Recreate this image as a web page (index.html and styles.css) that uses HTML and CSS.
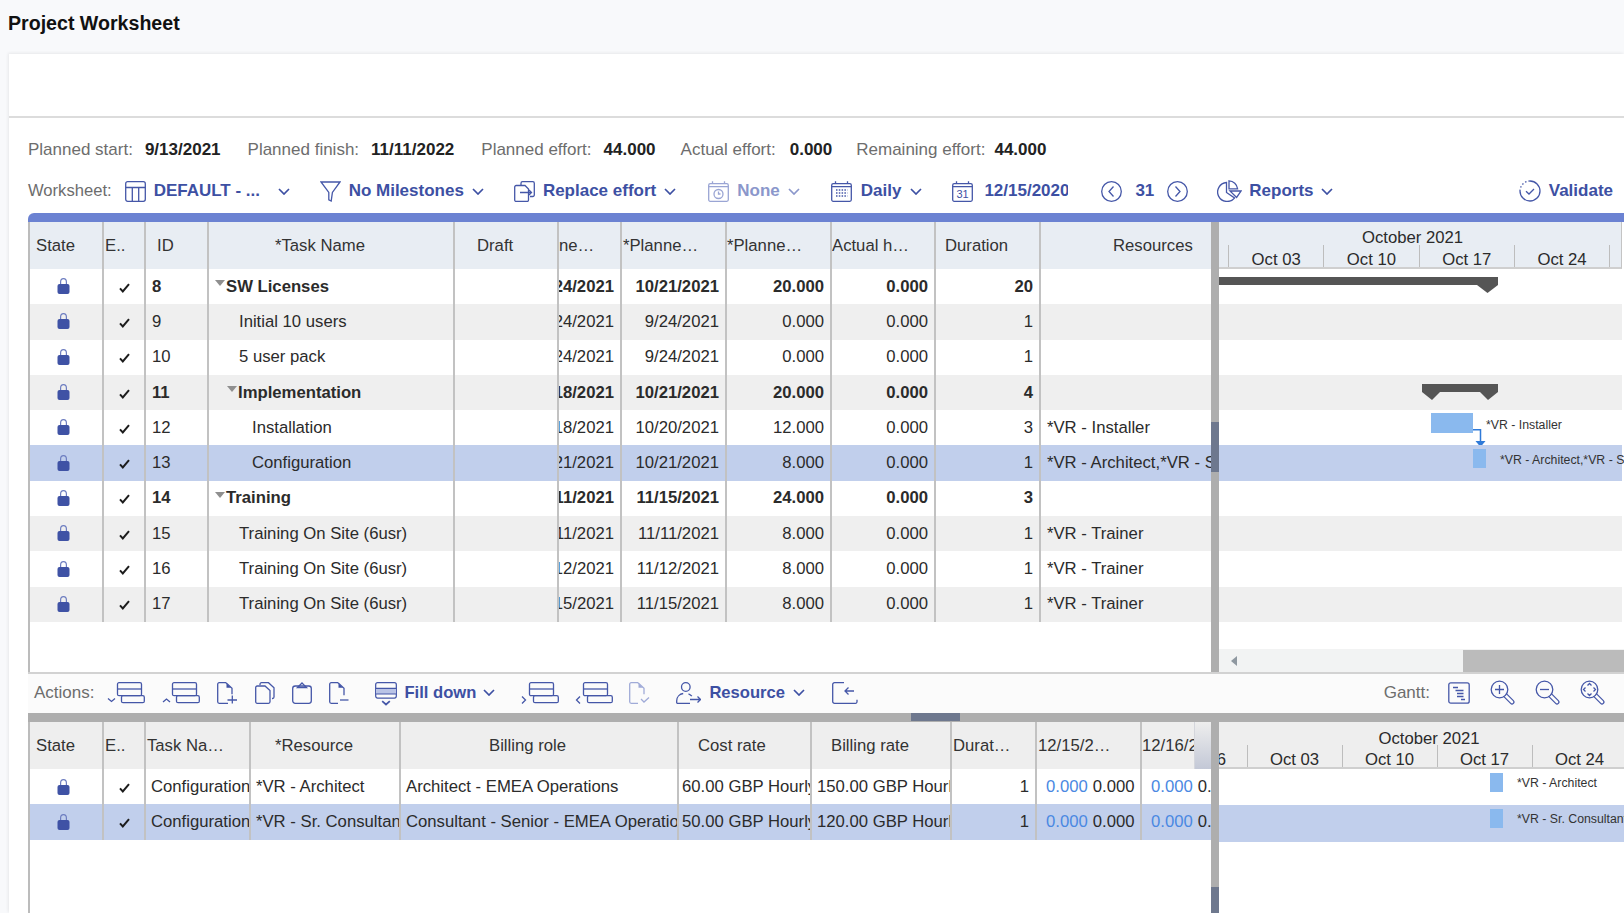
FILE: index.html
```html
<!DOCTYPE html>
<html lang="en">
<head>
<meta charset="utf-8">
<title>Project Worksheet</title>
<link rel="stylesheet" href="styles.css">
</head>
<body>
<svg class="sprite" xmlns="http://www.w3.org/2000/svg">
  <symbol id="chev" viewBox="0 0 12 7"><path d="M1 1l5 5 5-5"/></symbol>
  <symbol id="lock" viewBox="0 0 13 16"><path class="shackle" d="M3.600 6.500V4a2.900 3.300 0 0 1 5.800 0v2.500"/><rect class="solid" x=".5" y="6" width="12" height="10" rx="2"/></symbol>
  <symbol id="check" viewBox="0 0 11 10"><path class="tick" d="M1 5.400l2.800 3L10 1.200"/></symbol>
  <symbol id="i-table" viewBox="0 0 21 21"><rect x=".7" y=".7" width="19.600" height="19.600" rx="2"/><path d="M.7 6.500h19.600M7.300 6.500v13.800M13.700 6.500v13.800"/></symbol>
  <symbol id="i-funnel" viewBox="0 0 21 21"><path d="M1 1h19l-7.600 10.400-1.200 8.600-2.400-1.200V11.400z"/></symbol>
  <symbol id="i-replace" viewBox="0 0 21 21"><path d="M7 4V2.200A1.500 1.500 0 0 1 8.500.7h10.300a1.500 1.500 0 0 1 1.500 1.500V14a1.500 1.500 0 0 1-1.500 1.500H16"/><path d="M2.200 4.500H11l3.500 3.500v11a1.500 1.500 0 0 1-1.500 1.500H2.200A1.500 1.500 0 0 1 .7 19V6a1.500 1.500 0 0 1 1.500-1.500z"/><path d="M6 11.500h11.500M15 9l2.500 2.500L15 14"/></symbol>
  <symbol id="i-clock" viewBox="0 0 21 21"><rect x=".7" y="2.700" width="19.600" height="17.600" rx="1.500"/><path d="M4.500.3v2.400M16.500.3v2.400M.7 5.700h19.600"/><circle cx="10.500" cy="13" r="4.500"/><path d="M10.500 10.500V13h2"/></symbol>
  <symbol id="i-cal" viewBox="0 0 21 21"><rect x=".7" y="2.700" width="19.600" height="17.600" rx="1.500"/><path d="M4.500.3v2.400M16.500.3v2.400M.7 5.700h19.600"/><path class="dots" d="M5 9h11.500M5 12h11.500M5 15h11.500"/></symbol>
  <symbol id="i-date" viewBox="0 0 21 21"><rect x=".7" y="2.700" width="19.600" height="17.600" rx="1.500"/><path d="M4.500.3v2.400M16.500.3v2.400M.7 5.700h19.600"/><text class="svgtext" x="10.500" y="16.800" text-anchor="middle">31</text></symbol>
  <symbol id="i-prev" viewBox="0 0 21 21"><circle cx="10.500" cy="10.500" r="9.800"/><path d="M12.500 5.500l-4.500 5 4.500 5"/></symbol>
  <symbol id="i-next" viewBox="0 0 21 21"><circle cx="10.500" cy="10.500" r="9.800"/><path d="M8.500 5.500l4.500 5-4.500 5"/></symbol>
  <symbol id="i-reports" viewBox="0 0 25 22"><path d="M9.500 2.500A9.500 9.500 0 1 0 17.500 18L9.500 12.500z"/><path d="M12 .8a9 9 0 0 1 8.600 8H12z"/><path d="M13 11h11l-4.400 6.400z"/></symbol>
  <symbol id="i-validate" viewBox="0 0 22 22"><path d="M11 1a10 10 0 1 1-10 10"/><path class="dashed" d="M1 11A10 10 0 0 1 11 1"/><path d="M7 11.200l3 2.800 5-5"/></symbol>
  <symbol id="a-down" viewBox="0 0 38 22"><rect x="10.500" y=".7" width="24" height="13" rx="1.500"/><path d="M10.500 7h24"/><rect x="14.500" y="13.700" width="22.800" height="7" rx="1.500"/><path d="M1 16.500l3.500 3 3.500-3"/></symbol>
  <symbol id="a-up" viewBox="0 0 38 22"><rect x="10.500" y=".7" width="24" height="13" rx="1.500"/><path d="M10.500 7h24"/><rect x="14.500" y="13.700" width="22.800" height="7" rx="1.500"/><path d="M1 20l3.500-3 3.500 3"/></symbol>
  <symbol id="a-right" viewBox="0 0 38 22"><rect x="8.500" y=".7" width="24" height="13" rx="1.500"/><path d="M8.500 7h24"/><rect x="12.500" y="13.700" width="24.800" height="7" rx="1.500"/><path d="M1 14.500l3.500 3.500-3.500 3.500"/></symbol>
  <symbol id="a-left" viewBox="0 0 38 22"><rect x="8.500" y=".7" width="24" height="13" rx="1.500"/><path d="M8.500 7h24"/><rect x="12.500" y="13.700" width="24.800" height="7" rx="1.500"/><path d="M5 14.500l-3.500 3.500 3.500 3.500"/></symbol>
  <symbol id="d-plus" viewBox="0 0 21 22"><path d="M9 .7H2.200A1.500 1.500 0 0 0 .7 2.200V19.800a1.500 1.500 0 0 0 1.500 1.500H11"/><path d="M9 .7l6 5.500v6"/><path class="solid" d="M9.500 1.500l4.500 4.300H9.500z"/><path d="M10.500 18h9.500M15.300 13.500v8"/></symbol>
  <symbol id="d-copy" viewBox="0 0 20 22"><path d="M5 3V2.200A1.500 1.500 0 0 1 6.500.7h7l5.500 5V15a1.500 1.500 0 0 1-1.500 1.500H17"/><path d="M2.200 4h7.800l5 4.500v11.300a1.500 1.500 0 0 1-1.500 1.500H2.200a1.500 1.500 0 0 1-1.500-1.500V5.500A1.500 1.500 0 0 1 2.200 4z"/></symbol>
  <symbol id="d-paste" viewBox="0 0 20 22"><rect x=".7" y="4" width="18.600" height="17.300" rx="2.500"/><path d="M5.500 5.500L10 1l4.500 4.500z"/></symbol>
  <symbol id="d-minus" viewBox="0 0 20 22"><path d="M9 .7H2.200A1.500 1.500 0 0 0 .7 2.200V19.800a1.500 1.500 0 0 0 1.500 1.500H9"/><path d="M9 .7l6 5.500v7"/><path class="solid" d="M9.500 1.500l4.500 4.300H9.500z"/><path d="M11 18h8.500"/></symbol>
  <symbol id="d-check" viewBox="0 0 21 22"><path d="M9 .7H2.200A1.500 1.500 0 0 0 .7 2.200V19.800a1.500 1.500 0 0 0 1.500 1.500H9"/><path d="M9 .7l6 5.500v6"/><path class="solid soft" d="M9.500 1.500l4.500 4.300H9.500z"/><path d="M12 17l3 3 5-4.500"/></symbol>
  <symbol id="a-fill" viewBox="0 0 23 25"><rect x=".7" y=".7" width="21.600" height="16" rx="2"/><rect class="band" x="1.200" y="6.500" width="20.600" height="6"/><path d="M.7 6.500h21.600M.7 12.500h21.600"/><path class="thick" d="M7.500 20l4 3.500 4-3.500"/></symbol>
  <symbol id="a-user" viewBox="0 0 25 22"><circle cx="9.800" cy="5" r="4.300"/><path d="M.7 21.300v-2.500c0-4 3-6.800 6.500-7.300M.7 21.300H14"/><path d="M12.500 11.800c1.500.6 2.500 1.300 3.300 2.400"/><path d="M14 17.500h10.500M21.500 14.500l3 3-3 3"/></symbol>
  <symbol id="a-exit" viewBox="0 0 26 22"><path d="M12 .7H2.500A1.800 1.800 0 0 0 .7 2.500v17a1.800 1.800 0 0 0 1.800 1.800h21a1.500 1.500 0 0 0 1.500-1.500v-2"/><path d="M22 9H13M16.500 5.500L13 9l3.500 3.500"/></symbol>
  <symbol id="g-list" viewBox="0 0 22 22"><rect x=".8" y=".8" width="20.400" height="20.400" rx="2"/><path d="M5 5.500h5M7.500 8.500h8M9 11.500h6.500M9 14.500h6.500M13 17.500h4"/></symbol>
  <symbol id="g-in" viewBox="0 0 25 25"><path class="hd1" d="M15.500 15.500l6.500 6.500"/><path class="hd2" d="M15.500 15.500l6.500 6.500"/><circle class="lens" cx="9.500" cy="9.500" r="8.300"/><path d="M5 9.500h9M9.500 5v9"/></symbol>
  <symbol id="g-out" viewBox="0 0 25 25"><path class="hd1" d="M15.500 15.500l6.500 6.500"/><path class="hd2" d="M15.500 15.500l6.500 6.500"/><circle class="lens" cx="9.500" cy="9.500" r="8.300"/><path d="M5 9.500h9"/></symbol>
  <symbol id="g-fit" viewBox="0 0 25 25"><path class="hd1" d="M15.500 15.500l6.500 6.500"/><path class="hd2" d="M15.500 15.500l6.500 6.500"/><circle class="lens" cx="9.500" cy="9.500" r="8.300"/><path d="M7.500 5.500l2-2 2 2M7.500 13.500l2 2 2-2M5.500 7.500l-2 2 2 2M13.500 7.500l2 2-2 2"/></symbol>
</svg>

<h1 class="title">Project Worksheet</h1>

<main class="card">
  <div class="card-top"></div>

  <div class="meta">
    <span class="lbl">Planned start:</span><b class="val">9/13/2021</b>
    <span class="lbl">Planned finish:</span><b class="val">11/11/2022</b>
    <span class="lbl">Planned effort:</span><b class="val v-tight">44.000</b>
    <span class="lbl">Actual effort:</span><b class="val v-actual">0.000</b>
    <span class="lbl">Remaining effort:</span><b class="val v-last">44.000</b>
  </div>

  <div class="toolbar">
    <span class="lbl tb-lbl">Worksheet:</span>
    <div class="tool"><svg class="ic" width="21" height="21"><use href="#i-table"/></svg><span class="tool-text t-default">DEFAULT - ...</span><svg class="chev" width="12" height="7"><use href="#chev"/></svg></div>
    <div class="tool"><svg class="ic" width="21" height="21"><use href="#i-funnel"/></svg><span class="tool-text">No Milestones</span><svg class="chev" width="12" height="7"><use href="#chev"/></svg></div>
    <div class="tool"><svg class="ic" width="21" height="21"><use href="#i-replace"/></svg><span class="tool-text">Replace effort</span><svg class="chev" width="12" height="7"><use href="#chev"/></svg></div>
    <div class="tool muted"><svg class="ic" width="21" height="21"><use href="#i-clock"/></svg><span class="tool-text">None</span><svg class="chev" width="12" height="7"><use href="#chev"/></svg></div>
    <div class="tool tool-daily"><svg class="ic" width="21" height="21"><use href="#i-cal"/></svg><span class="tool-text">Daily</span><svg class="chev" width="12" height="7"><use href="#chev"/></svg></div>
    <div class="tool"><svg class="ic" width="21" height="21"><use href="#i-date"/></svg><span class="tool-text t-date">12/15/2020</span></div>
    <div class="tool pager"><svg class="ic" width="21" height="21"><use href="#i-prev"/></svg><span class="tool-text">31</span><svg class="ic" width="21" height="21"><use href="#i-next"/></svg></div>
    <div class="tool tool-reports"><svg class="ic" width="25" height="22"><use href="#i-reports"/></svg><span class="tool-text">Reports</span><svg class="chev" width="12" height="7"><use href="#chev"/></svg></div>
    <div class="tool validate"><svg class="ic" width="22" height="22"><use href="#i-validate"/></svg><span class="tool-text">Validate</span></div>
  </div>

  <section class="workspace">
    <div class="bluebar"></div>

    <div class="pane pane-upper">
      <div class="table">
        <div class="row uc head uh">
          <div class="c">State</div><div class="c">E..</div><div class="c">ID</div><div class="c">*Task Name</div><div class="c">Draft</div><div class="c">ne…</div><div class="c">*Planne…</div><div class="c">*Planne…</div><div class="c">Actual h…</div><div class="c">Duration</div><div class="c">Resources</div>
        </div>
        <div class="row uc body bold">
          <div class="c mid"><svg class="lk" width="13" height="16"><use href="#lock"/></svg></div><div class="c mid"><svg class="chk" width="11" height="10"><use href="#check"/></svg></div><div class="c idc">8</div><div class="c lv1"><i class="tri"></i>SW Licenses</div><div class="c"></div><div class="c end"><span>9/24/2021</span></div><div class="c end"><span>10/21/2021</span></div><div class="c end"><span>20.000</span></div><div class="c end"><span>0.000</span></div><div class="c end"><span>20</span></div><div class="c res"></div>
        </div>
        <div class="row uc body alt">
          <div class="c mid"><svg class="lk" width="13" height="16"><use href="#lock"/></svg></div><div class="c mid"><svg class="chk" width="11" height="10"><use href="#check"/></svg></div><div class="c idc">9</div><div class="c lv2">Initial 10 users</div><div class="c"></div><div class="c end"><span>9/24/2021</span></div><div class="c end"><span>9/24/2021</span></div><div class="c end"><span>0.000</span></div><div class="c end"><span>0.000</span></div><div class="c end"><span>1</span></div><div class="c res"></div>
        </div>
        <div class="row uc body">
          <div class="c mid"><svg class="lk" width="13" height="16"><use href="#lock"/></svg></div><div class="c mid"><svg class="chk" width="11" height="10"><use href="#check"/></svg></div><div class="c idc">10</div><div class="c lv2">5 user pack</div><div class="c"></div><div class="c end"><span>9/24/2021</span></div><div class="c end"><span>9/24/2021</span></div><div class="c end"><span>0.000</span></div><div class="c end"><span>0.000</span></div><div class="c end"><span>1</span></div><div class="c res"></div>
        </div>
        <div class="row uc body alt bold">
          <div class="c mid"><svg class="lk" width="13" height="16"><use href="#lock"/></svg></div><div class="c mid"><svg class="chk" width="11" height="10"><use href="#check"/></svg></div><div class="c idc">11</div><div class="c lv2t"><i class="tri"></i>Implementation</div><div class="c"></div><div class="c end"><span>10/18/2021</span></div><div class="c end"><span>10/21/2021</span></div><div class="c end"><span>20.000</span></div><div class="c end"><span>0.000</span></div><div class="c end"><span>4</span></div><div class="c res"></div>
        </div>
        <div class="row uc body">
          <div class="c mid"><svg class="lk" width="13" height="16"><use href="#lock"/></svg></div><div class="c mid"><svg class="chk" width="11" height="10"><use href="#check"/></svg></div><div class="c idc">12</div><div class="c lv3">Installation</div><div class="c"></div><div class="c end"><span>10/18/2021</span></div><div class="c end"><span>10/20/2021</span></div><div class="c end"><span>12.000</span></div><div class="c end"><span>0.000</span></div><div class="c end"><span>3</span></div><div class="c res">*VR - Installer</div>
        </div>
        <div class="row uc body sel">
          <div class="c mid"><svg class="lk" width="13" height="16"><use href="#lock"/></svg></div><div class="c mid"><svg class="chk" width="11" height="10"><use href="#check"/></svg></div><div class="c idc">13</div><div class="c lv3">Configuration</div><div class="c"></div><div class="c end"><span>10/21/2021</span></div><div class="c end"><span>10/21/2021</span></div><div class="c end"><span>8.000</span></div><div class="c end"><span>0.000</span></div><div class="c end"><span>1</span></div><div class="c res">*VR - Architect,*VR - Sr. Consultant</div>
        </div>
        <div class="row uc body bold">
          <div class="c mid"><svg class="lk" width="13" height="16"><use href="#lock"/></svg></div><div class="c mid"><svg class="chk" width="11" height="10"><use href="#check"/></svg></div><div class="c idc">14</div><div class="c lv1"><i class="tri"></i>Training</div><div class="c"></div><div class="c end"><span>11/11/2021</span></div><div class="c end"><span>11/15/2021</span></div><div class="c end"><span>24.000</span></div><div class="c end"><span>0.000</span></div><div class="c end"><span>3</span></div><div class="c res"></div>
        </div>
        <div class="row uc body alt">
          <div class="c mid"><svg class="lk" width="13" height="16"><use href="#lock"/></svg></div><div class="c mid"><svg class="chk" width="11" height="10"><use href="#check"/></svg></div><div class="c idc">15</div><div class="c lv2">Training On Site (6usr)</div><div class="c"></div><div class="c end"><span>11/11/2021</span></div><div class="c end"><span>11/11/2021</span></div><div class="c end"><span>8.000</span></div><div class="c end"><span>0.000</span></div><div class="c end"><span>1</span></div><div class="c res">*VR - Trainer</div>
        </div>
        <div class="row uc body">
          <div class="c mid"><svg class="lk" width="13" height="16"><use href="#lock"/></svg></div><div class="c mid"><svg class="chk" width="11" height="10"><use href="#check"/></svg></div><div class="c idc">16</div><div class="c lv2">Training On Site (6usr)</div><div class="c"></div><div class="c end"><span>11/12/2021</span></div><div class="c end"><span>11/12/2021</span></div><div class="c end"><span>8.000</span></div><div class="c end"><span>0.000</span></div><div class="c end"><span>1</span></div><div class="c res">*VR - Trainer</div>
        </div>
        <div class="row uc body alt">
          <div class="c mid"><svg class="lk" width="13" height="16"><use href="#lock"/></svg></div><div class="c mid"><svg class="chk" width="11" height="10"><use href="#check"/></svg></div><div class="c idc">17</div><div class="c lv2">Training On Site (6usr)</div><div class="c"></div><div class="c end"><span>11/15/2021</span></div><div class="c end"><span>11/15/2021</span></div><div class="c end"><span>8.000</span></div><div class="c end"><span>0.000</span></div><div class="c end"><span>1</span></div><div class="c res">*VR - Trainer</div>
        </div>
      </div>

      <div class="vsplit"><div class="thumb thumb-u"></div></div>

      <div class="gantt">
        <div class="g-head g-head-u">
          <div class="g-month">October 2021</div>
          <div class="g-weeks g-weeks-u"><span>Oct 03</span><span>Oct 10</span><span>Oct 17</span><span>Oct 24</span><span></span></div>
        </div>
        <div class="g-row">
          <svg class="sum sum-a" width="279" height="16"><polygon points="0,0 279,0 279,8 268.500,16 258,8 0,8"/></svg>
        </div>
        <div class="g-row alt"></div>
        <div class="g-row"></div>
        <div class="g-row alt">
          <svg class="sum sum-b" width="76" height="16"><polygon points="0,0 76,0 76,8 66,16 58,8 18,8 10,16 0,8"/></svg>
        </div>
        <div class="g-row">
          <div class="bar bar-inst"></div><span class="g-lbl lbl-inst">*VR - Installer</span>
          <svg class="link" width="14" height="19"><path class="link-line" d="M0 .8h7.500V13"/><polygon class="link-head" points="2.500,12 12.500,12 7.500,18"/></svg>
        </div>
        <div class="g-row sel">
          <div class="bar bar-conf"></div><span class="g-lbl lbl-conf">*VR - Architect,*VR - Sr. Consultant</span>
        </div>
        <div class="g-row"></div>
        <div class="g-row alt"></div>
        <div class="g-row"></div>
        <div class="g-row alt"></div>
        <div class="g-scroll"><svg class="g-arrow" width="6" height="10"><polygon points="6,0 6,10 0,5"/></svg><div class="g-thumb"></div></div>
      </div>
    </div>

    <div class="actions">
      <span class="lbl">Actions:</span>
      <svg class="ic" width="38" height="22"><use href="#a-down"/></svg>
      <svg class="ic" width="38" height="22"><use href="#a-up"/></svg>
      <svg class="ic" width="21" height="22"><use href="#d-plus"/></svg>
      <svg class="ic" width="20" height="22"><use href="#d-copy"/></svg>
      <svg class="ic" width="20" height="22"><use href="#d-paste"/></svg>
      <svg class="ic" width="20" height="22"><use href="#d-minus"/></svg>
      <div class="tool act-wide act-fill"><svg class="ic fill-ic" width="23" height="25"><use href="#a-fill"/></svg><span class="tool-text">Fill down</span><svg class="chev" width="12" height="7"><use href="#chev"/></svg></div>
      <svg class="ic act-wide" width="38" height="22"><use href="#a-right"/></svg>
      <svg class="ic act-tight" width="38" height="22"><use href="#a-left"/></svg>
      <svg class="ic faded act-tight" width="21" height="22"><use href="#d-check"/></svg>
      <div class="tool act-wide"><svg class="ic" width="25" height="22"><use href="#a-user"/></svg><span class="tool-text">Resource</span><svg class="chev" width="12" height="7"><use href="#chev"/></svg></div>
      <svg class="ic act-exit" width="26" height="22"><use href="#a-exit"/></svg>
      <div class="gantt-tools">
        <span class="lbl">Gantt:</span>
        <svg class="ic" width="22" height="22"><use href="#g-list"/></svg>
        <svg class="ic" width="25" height="25"><use href="#g-in"/></svg>
        <svg class="ic" width="25" height="25"><use href="#g-out"/></svg>
        <svg class="ic" width="25" height="25"><use href="#g-fit"/></svg>
      </div>
    </div>

    <div class="hsplit"><div class="hthumb"></div></div>

    <div class="pane pane-lower">
      <div class="table lower">
        <div class="row lc head lh">
          <div class="c">State</div><div class="c">E..</div><div class="c">Task Na…</div><div class="c">*Resource</div><div class="c">Billing role</div><div class="c">Cost rate</div><div class="c">Billing rate</div><div class="c">Durat…</div><div class="c">12/15/2…</div><div class="c c-clip"><span>12/16/2021</span></div>
        </div>
        <div class="row lc body">
          <div class="c mid"><svg class="lk" width="13" height="16"><use href="#lock"/></svg></div><div class="c mid"><svg class="chk" width="11" height="10"><use href="#check"/></svg></div><div class="c txt">Configuration</div><div class="c txt">*VR - Architect</div><div class="c txt">Architect - EMEA Operations</div><div class="c txt t-cost">60.00 GBP Hourly</div><div class="c txt">150.00 GBP Hourly</div><div class="c end"><span>1</span></div><div class="c num"><em>0.000</em> 0.000</div><div class="c num"><em>0.000</em> 0.000</div>
        </div>
        <div class="row lc body sel">
          <div class="c mid"><svg class="lk" width="13" height="16"><use href="#lock"/></svg></div><div class="c mid"><svg class="chk" width="11" height="10"><use href="#check"/></svg></div><div class="c txt">Configuration</div><div class="c txt">*VR - Sr. Consultant</div><div class="c txt">Consultant - Senior - EMEA Operations</div><div class="c txt t-cost">50.00 GBP Hourly</div><div class="c txt">120.00 GBP Hourly</div><div class="c end"><span>1</span></div><div class="c num"><em>0.000</em> 0.000</div><div class="c num"><em>0.000</em> 0.000</div>
        </div>
        <div class="corner"></div>
      </div>

      <div class="vsplit"><div class="thumb thumb-l"></div></div>

      <div class="gantt">
        <div class="g-head g-head-l">
          <div class="g-month g-month-l">October 2021</div>
          <div class="g-weeks g-weeks-l"><span>Sep 26</span><span>Oct 03</span><span>Oct 10</span><span>Oct 17</span><span>Oct 24</span></div>
        </div>
        <div class="g-row g-row-l">
          <div class="bar bar-res"></div><span class="g-lbl lbl-res">*VR - Architect</span>
        </div>
        <div class="g-row g-row-l sel">
          <div class="bar bar-res"></div><span class="g-lbl lbl-res">*VR - Sr. Consultant</span>
        </div>
      </div>
    </div>
  </section>
</main>
</body>
</html>
```

FILE: styles.css
```css
* { box-sizing: border-box; }

html, body {
  margin: 0;
  height: 100vh;
  overflow: hidden;
}

body {
  display: flex;
  flex-direction: column;
  background: #f8f9fb;
  color: #2b2b2b;
  font-family: "Liberation Sans", Arial, sans-serif;
  font-size: 16.7px;
}

.sprite { display: none; }

.title {
  flex: none;
  height: 54px;
  margin: 0;
  padding: 12px 0 0 8px;
  font-size: 19.6px;
  line-height: 23px;
  font-weight: 700;
  color: #111;
}

.card {
  flex: 1;
  min-height: 0;
  margin-left: 9px;
  background: #fff;
  box-shadow: -1px -1px 3px rgba(0, 0, 0, .07);
  display: flex;
  flex-direction: column;
  overflow: hidden;
}

.card-top {
  flex: none;
  height: 64px;
  border-bottom: 2px solid #dcdcdc;
}

.lbl { color: #6d6d6d; white-space: nowrap; font-size: 17px; }

.meta {
  flex: none;
  height: 24px;
  margin-top: 20px;
  padding-left: 19px;
  display: flex;
  align-items: center;
  white-space: nowrap;
  font-size: 17px;
}
.val { color: #222; margin-left: 12px; margin-right: 27px; font-weight: 700; }
.v-tight { margin-right: 25px; }
.v-actual { margin-left: 14px; margin-right: 24px; }
.v-last { margin-left: 9px; }

.toolbar {
  flex: none;
  height: 24px;
  margin-top: 17px;
  padding-left: 19px;
  padding-right: 11px;
  display: flex;
  align-items: center;
  gap: 30px;
  font-size: 17px;
}
.tb-lbl { margin-right: -17px; font-size: 16.600px; }

.tool {
  display: flex;
  align-items: center;
  gap: 8px;
  color: #3d50a3;
  white-space: nowrap;
}
.tool-text { font-weight: 700; }
.t-default { width: 116px; }
.t-date { width: 83.500px; overflow: hidden; margin-left: 3px; }
.tool-daily { margin-left: 1px; gap: 9px; }
.pager { gap: 13px; margin-left: 3.500px; }
.tool-reports { gap: 7px; margin-left: -1px; }
.validate { margin-left: auto; }
.muted { color: #8b97cb; margin-left: 2px; }

.ic {
  flex: none;
  fill: none;
  stroke: #4557a8;
  stroke-width: 1.3;
}
.muted .ic { stroke: #9aa5d4; }
.faded { stroke: #a0abd8; }

.chev {
  flex: none;
  fill: none;
  stroke: currentColor;
  stroke-width: 1.7;
}

.solid { fill: #3f52a5; stroke: none; }
.soft { fill: #a0abd8; }
.shackle { fill: none; stroke: #6d7dc0; stroke-width: 1.2; }
.tick { fill: none; stroke: #1c1c1c; stroke-width: 2; }
.dots { stroke-dasharray: 1.500 1.300; }
.dashed { stroke-dasharray: 1.500 2; }
.svgtext { font: 11px "Liberation Sans", Arial, sans-serif; fill: #3d50a3; stroke: none; }
.band { fill: #b9c3e6; stroke: none; }
.thick { stroke-width: 1.8; }
.lens { fill: #fbfbfb; }
.hd1 { stroke-width: 5; stroke-linecap: round; }
.hd2 { stroke: #fbfbfb; stroke-width: 2.600; stroke-linecap: round; }

.workspace {
  flex: 1;
  min-height: 0;
  margin: 10px 0 0 19px;
  display: flex;
  flex-direction: column;
}

.bluebar {
  flex: none;
  height: 9px;
  background: #6b82d2;
  border-radius: 6px 0 0 0;
}

.pane { flex: none; display: flex; }
.pane-upper { height: 450px; }
.pane-lower { flex: 1; min-height: 0; }

.table {
  position: relative;
  flex: none;
  width: 1183px;
  border-left: 2px solid #bcbcbc;
  overflow: hidden;
}

.row { display: grid; height: 35.300px; }
.uc { grid-template-columns: 74px 42px 63px 246px 104px 63px 105px 105px 104px 105px 170px; }
.lc { grid-template-columns: 74px 42px 105px 150px 278px 133px 140px 85px 105px 69px; }

.row.head { height: 47px; background: #e8edf3; color: #333; }
.lh.row.head { background: #eeeeee; }
.lc.body { height: 35.400px; }

.c {
  display: flex;
  align-items: center;
  min-width: 0;
  overflow: hidden;
  white-space: nowrap;
  border-right: 2px solid #c2c2c2;
}
.c:last-child { border-right: 0; }

.uh .c:nth-child(1), .lh .c:nth-child(1) { padding-left: 6px; }
.uh .c:nth-child(2), .lh .c:nth-child(2) { padding-left: 1px; }
.uh .c:nth-child(3) { padding-left: 11px; }
.uh .c:nth-child(4) { padding-left: 66px; }
.uh .c:nth-child(5) { padding-left: 22px; }
.uh .c:nth-child(10) { padding-left: 9px; }
.uh .c:nth-child(11) { padding-left: 72px; }
.uh .c:nth-child(7) { padding-left: 1px; }

.lh .c:nth-child(3) { padding-left: 1px; }
.lh .c:nth-child(4) { padding-left: 24px; }
.lh .c:nth-child(5) { padding-left: 88px; }
.lh .c:nth-child(6) { padding-left: 19px; }
.lh .c:nth-child(7) { padding-left: 19px; }
.lh .c:nth-child(8) { padding-left: 1px; }
.lh .c:nth-child(9) { padding-left: 1px; }
.c-clip { padding-right: 17px; }
.c-clip span { min-width: 0; overflow: hidden; }

.body.alt { background: #efefef; }
.sel { background: #c1cfec !important; }
.bold { font-weight: 700; }

.mid { justify-content: center; }
.mid .chk { margin: 2px 0 0 0; }
.row.body .c:first-child { padding-right: 5px; }
.uc .lk { margin-top: -1px; }
.idc { padding-left: 6px; }
.lv1 { padding-left: 6px; }
.lv2 { padding-left: 30px; }
.lv2t { padding-left: 18px; }
.lv3 { padding-left: 43px; }

.tri {
  flex: none;
  width: 0;
  height: 0;
  margin: -7px 1px 0 0;
  border-left: 5.500px solid transparent;
  border-right: 5.500px solid transparent;
  border-top: 6px solid #8f8f8f;
}

.end { justify-content: flex-end; padding-right: 6px; }
.end span { flex: none; }
.res { padding-left: 6px; }
.txt { padding-left: 5px; }
.t-cost { padding-left: 3px; }
.num { padding-left: 9px; }
.num em { font-style: normal; color: #4a88e2; margin-right: 5px; }

.corner {
  position: absolute;
  top: 0;
  right: 0;
  width: 17px;
  height: 47px;
  background: linear-gradient(#eeeeee, #c3c8d6);
  border-left: 1px solid #d4d6dc;
}

.vsplit { flex: none; width: 8px; background: #aeaeae; }
.thumb { width: 100%; background: #6e788e; }
.thumb-u { height: 50px; margin-top: 200px; }
.thumb-l { height: 26px; margin-top: 165px; }

.gantt {
  flex: none;
  width: 405px;
  display: flex;
  flex-direction: column;
  overflow: hidden;
}

.g-head {
  flex: none;
  height: 47px;
  background: #e8edf3;
  border-bottom: 2px solid #cfcfcf;
  margin-right: 2px;
  text-align: center;
  overflow: hidden;
}
.g-head-u { border-right: 1px solid #c4c4c4; }
.g-head-l { background: #eeeeee; margin-right: 0; }

.g-month { height: 23px; line-height: 31px; padding-right: 15px; }
.g-month-l { line-height: 34px; padding-right: 0; padding-left: 15px; }

.g-weeks { display: flex; height: 22px; }
.g-weeks-u { margin-left: 9px; }
.g-weeks-l { margin-left: -67.500px; }
.g-weeks span {
  flex: none;
  width: 95.300px;
  padding-top: 5px;
  line-height: 20px;
  border-left: 1px solid #bdbdbd;
  white-space: nowrap;
}
.g-weeks-l span { width: 95px; }

.g-row { position: relative; flex: none; height: 35.300px; margin-right: 2px; }
.g-row.alt { background: #efefef; }
.g-row-l { height: 35.500px; margin-right: 0; }
.g-row-l.sel { height: 37px; }

.bar { position: absolute; background: #8ab9ee; }
.bar-inst { left: 212px; top: 3px; width: 42px; height: 20px; }
.bar-conf { left: 254px; top: 4px; width: 13px; height: 19px; }
.bar-res { left: 271px; top: 4px; width: 13px; height: 19px; }

.g-lbl { position: absolute; font-size: 12.300px; line-height: 16px; white-space: nowrap; color: #333; }
.lbl-inst { left: 267px; top: 7px; }
.lbl-conf { left: 281px; top: 7px; }
.lbl-res { left: 298px; top: 6px; }

.sum { position: absolute; fill: #555; }
.sum-a { left: 0; top: 8px; }
.sum-b { left: 203px; top: 9px; }

.link { position: absolute; left: 254px; top: 19px; overflow: visible; }
.link-line { fill: none; stroke: #2f7ad8; stroke-width: 1.500; }
.link-head { fill: #2f7ad8; }

.g-scroll {
  flex: none;
  display: flex;
  align-items: center;
  height: 23px;
  margin-top: auto;
  background: #f2f3f3;
  padding-left: 12px;
}
.g-arrow { fill: #8f98a0; flex: none; }
.g-thumb { align-self: stretch; margin: 1px 0 0 226px; width: 161px; background: #bbbbbb; }

.actions {
  flex: none;
  height: 41px;
  background: #fbfbfb;
  border-top: 2px solid #d2d2d2;
  padding: 0 19px 2px 6px;
  display: flex;
  align-items: center;
  gap: 17px;
  font-size: 16.600px;
}
.actions > .lbl { margin-right: -4px; }
.act-wide { margin-left: 9px; }
.act-fill { gap: 7px; }
.fill-ic { width: 22px; height: 24px; margin-top: 2px; }
.act-tight { margin-left: -1px; }
.act-exit { margin-left: 10px; }

.gantt-tools { margin-left: auto; display: flex; align-items: center; gap: 20px; }
.gantt-tools .lbl { margin-right: -2px; }

.hsplit { flex: none; height: 9px; background: #aeaeae; }
.hthumb { width: 49px; height: 8px; margin-left: 883px; background: #6e788e; }
```
